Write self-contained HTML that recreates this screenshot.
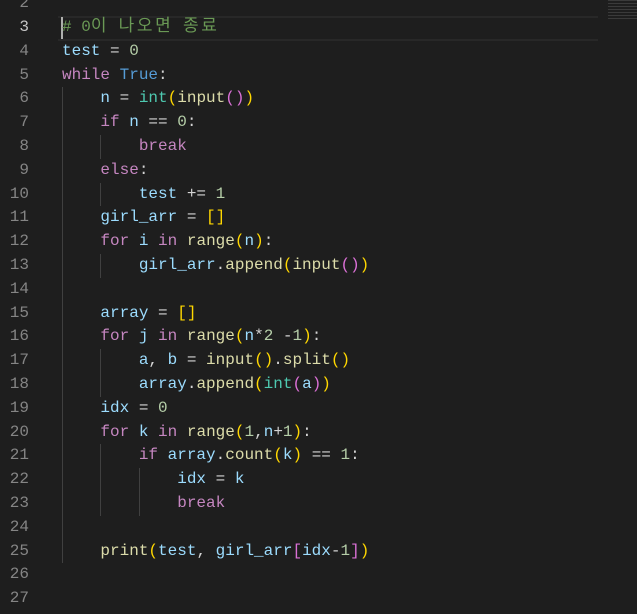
<!DOCTYPE html><html><head><meta charset="utf-8"><style>
body{margin:0;width:637px;height:614px;background:#1e1e1e;overflow:hidden;font-family:"Liberation Mono","Noto Sans CJK KR",monospace;font-size:16px}
#c{position:absolute;top:-31.6px;left:0;width:637px}
.l{height:23.8px;line-height:23.8px;position:relative;white-space:pre}
.n{position:absolute;left:0;width:29px;text-align:right;color:#858585}
.t{position:absolute;left:62px;color:#d4d4d4}
.cur .n{color:#c6c6c6}
.hl{position:absolute;left:58px;top:16px;width:540px;height:21px;border-top:2px solid #282828;border-bottom:2px solid #282828}
.g{position:absolute;width:1px;background:#404040;height:23.8px}
.k{color:#c586c0}.b{color:#569cd6}.v{color:#9cdcfe}.f{color:#dcdcaa}.c{color:#4ec9b0}.m{color:#b5cea8}.cm{color:#6a9955}
.y{color:#ffd700}.p{color:#da70d6}.u{color:#179fff}
.ko{font-size:17px;letter-spacing:2.6px}
</style></head><body>
<div class="hl"></div>
<div style="position:absolute;left:61px;top:17px;width:2px;height:22px;background:#aeafad"></div>
<div id="c">
<div class="l"><span class="n">1</span></div>
<div class="l"><span class="n">2</span></div>
<div class="l cur"><span class="n">3</span><span class="t cm"># 0<span class="ko">이</span> <span class="ko">나오면</span> <span class="ko">종료</span></span></div>
<div class="l"><span class="n">4</span><span class="t"><span class="v">test</span> = <span class="m">0</span></span></div>
<div class="l"><span class="n">5</span><span class="t"><span class="k">while</span> <span class="b">True</span>:</span></div>
<div class="l"><span class="n">6</span><span class="g" style="left:62px"></span><span class="t">    <span class="v">n</span> = <span class="c">int</span><span class="y">(</span><span class="f">input</span><span class="p">()</span><span class="y">)</span></span></div>
<div class="l"><span class="n">7</span><span class="g" style="left:62px"></span><span class="t">    <span class="k">if</span> <span class="v">n</span> == <span class="m">0</span>:</span></div>
<div class="l"><span class="n">8</span><span class="g" style="left:62px"></span><span class="g" style="left:100px"></span><span class="t">        <span class="k">break</span></span></div>
<div class="l"><span class="n">9</span><span class="g" style="left:62px"></span><span class="t">    <span class="k">else</span>:</span></div>
<div class="l"><span class="n">10</span><span class="g" style="left:62px"></span><span class="g" style="left:100px"></span><span class="t">        <span class="v">test</span> += <span class="m">1</span></span></div>
<div class="l"><span class="n">11</span><span class="g" style="left:62px"></span><span class="t">    <span class="v">girl_arr</span> = <span class="y">[]</span></span></div>
<div class="l"><span class="n">12</span><span class="g" style="left:62px"></span><span class="t">    <span class="k">for</span> <span class="v">i</span> <span class="k">in</span> <span class="f">range</span><span class="y">(</span><span class="v">n</span><span class="y">)</span>:</span></div>
<div class="l"><span class="n">13</span><span class="g" style="left:62px"></span><span class="g" style="left:100px"></span><span class="t">        <span class="v">girl_arr</span>.<span class="f">append</span><span class="y">(</span><span class="f">input</span><span class="p">()</span><span class="y">)</span></span></div>
<div class="l"><span class="n">14</span><span class="g" style="left:62px"></span></div>
<div class="l"><span class="n">15</span><span class="g" style="left:62px"></span><span class="t">    <span class="v">array</span> = <span class="y">[]</span></span></div>
<div class="l"><span class="n">16</span><span class="g" style="left:62px"></span><span class="t">    <span class="k">for</span> <span class="v">j</span> <span class="k">in</span> <span class="f">range</span><span class="y">(</span><span class="v">n</span>*<span class="m">2</span> -<span class="m">1</span><span class="y">)</span>:</span></div>
<div class="l"><span class="n">17</span><span class="g" style="left:62px"></span><span class="g" style="left:100px"></span><span class="t">        <span class="v">a</span>, <span class="v">b</span> = <span class="f">input</span><span class="y">()</span>.<span class="f">split</span><span class="y">()</span></span></div>
<div class="l"><span class="n">18</span><span class="g" style="left:62px"></span><span class="g" style="left:100px"></span><span class="t">        <span class="v">array</span>.<span class="f">append</span><span class="y">(</span><span class="c">int</span><span class="p">(</span><span class="v">a</span><span class="p">)</span><span class="y">)</span></span></div>
<div class="l"><span class="n">19</span><span class="g" style="left:62px"></span><span class="t">    <span class="v">idx</span> = <span class="m">0</span></span></div>
<div class="l"><span class="n">20</span><span class="g" style="left:62px"></span><span class="t">    <span class="k">for</span> <span class="v">k</span> <span class="k">in</span> <span class="f">range</span><span class="y">(</span><span class="m">1</span>,<span class="v">n</span>+<span class="m">1</span><span class="y">)</span>:</span></div>
<div class="l"><span class="n">21</span><span class="g" style="left:62px"></span><span class="g" style="left:100px"></span><span class="t">        <span class="k">if</span> <span class="v">array</span>.<span class="f">count</span><span class="y">(</span><span class="v">k</span><span class="y">)</span> == <span class="m">1</span>:</span></div>
<div class="l"><span class="n">22</span><span class="g" style="left:62px"></span><span class="g" style="left:100px"></span><span class="g" style="left:139px"></span><span class="t">            <span class="v">idx</span> = <span class="v">k</span></span></div>
<div class="l"><span class="n">23</span><span class="g" style="left:62px"></span><span class="g" style="left:100px"></span><span class="g" style="left:139px"></span><span class="t">            <span class="k">break</span></span></div>
<div class="l"><span class="n">24</span><span class="g" style="left:62px"></span></div>
<div class="l"><span class="n">25</span><span class="g" style="left:62px"></span><span class="t">    <span class="f">print</span><span class="y">(</span><span class="v">test</span>, <span class="v">girl_arr</span><span class="p">[</span><span class="v">idx</span>-<span class="m">1</span><span class="p">]</span><span class="y">)</span></span></div>
<div class="l"><span class="n">26</span></div>
<div class="l"><span class="n">27</span></div>
</div>
<div style="position:absolute;left:608px;top:0;width:29px;height:20px;opacity:.5;background:repeating-linear-gradient(#555 0 1px,transparent 1px 3px)"></div>
</body></html>
